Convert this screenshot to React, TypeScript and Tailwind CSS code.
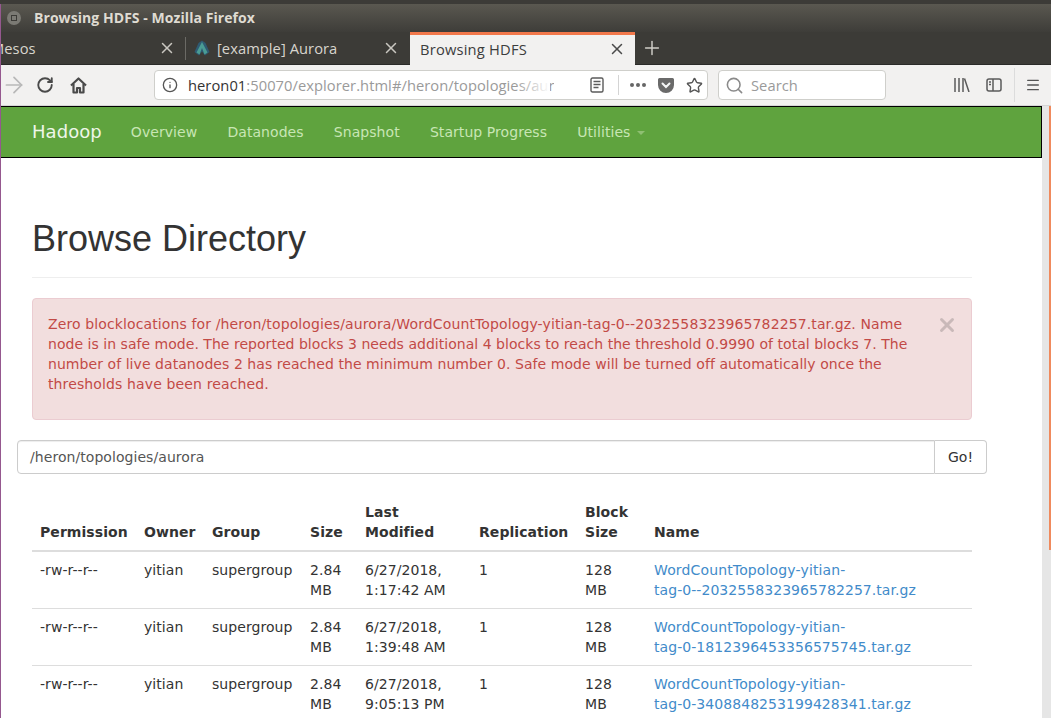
import { X, Plus, Info, Search, ArrowRight, RotateCw, Star, Menu } from "lucide-react";

const rows = [
  { time: "1:17:42 AM", file: "tag-0--2032558323965782257.tar.gz" },
  { time: "1:39:48 AM", file: "tag-0-1812396453356575745.tar.gz" },
  { time: "9:05:13 PM", file: "tag-0-3408848253199428341.tar.gz" },
];

function BrowserChrome() {
  return (
    <div className="font-['Open_Sans',sans-serif]">
      {/* Title bar */}
      <div className="h-[32px] border-t-[4px] border-[#3c3b37] bg-gradient-to-b from-[#5a5850] to-[#3e3d39] flex items-center pl-[7px]">
        <div className="w-[14px] h-[14px] rounded-full bg-[#7b7a74] flex items-center justify-center">
          <div className="w-[6px] h-[6px] border border-[#3c3b37]" />
        </div>
        <span className="ml-[13px] text-[14px] font-bold text-[#dfdbd2]">Browsing HDFS - Mozilla Firefox</span>
      </div>

      {/* Tabs */}
      <div className="h-[33px] bg-[#3c3b37] flex items-stretch text-[14.7px] border-b border-[#2a2a28]">
        <div className="w-[186px] relative overflow-hidden flex items-center">
          <span className="absolute left-[-9px] text-[#d8d5ce]">Mesos</span>
          <X size={18} strokeWidth={2} className="absolute left-[158px] text-[#c9c7c0]" />
          <div className="absolute right-0 top-[5px] bottom-[4px] w-px bg-[#6b6a65]" />
        </div>
        <div className="w-[224px] relative flex items-center">
          <svg width="16" height="16" viewBox="0 0 16 16" className="absolute left-[8px]">
            <path d="M8 0.5 L11.5 3 L15.5 12 L11 15.5 L8 11.5 L5 15.5 L0.5 12 L4.5 3 Z" fill="#2f5a72" />
            <path d="M8 2 L13.5 12.5 L10.5 14.5 L8 8 L5.5 14.5 L2.5 12.5 Z" fill="#4a9c94" />
          </svg>
          <span className="absolute left-[31px] text-[#d8d5ce]">[example] Aurora</span>
          <X size={18} strokeWidth={2} className="absolute left-[196px] text-[#c9c7c0]" />
        </div>
        <div className="w-[225px] -mb-px pb-[3px] bg-[#f2f1f0] border-t-[3px] border-[#f2784b] relative flex items-center">
          <span className="ml-[10px] text-[#3d3d3d] tracking-[0.2px]">Browsing HDFS</span>
          <X size={18} strokeWidth={2} className="absolute left-[198px] text-[#4a4a4a]" />
        </div>
        <div className="flex items-center ml-[6px]">
          <Plus size={22} strokeWidth={1.6} className="text-[#d0cec8]" />
        </div>
      </div>

      {/* Toolbar */}
      <div className="h-[41px] bg-[#f2f1f0] border-b border-[#d6d6d6] flex items-center relative">
        <ArrowRight size={26} strokeWidth={1.6} className="ml-[1px] text-[#b8b8b8]" />
        <RotateCw size={18} className="ml-[9px] text-[#4a4a4a]" strokeWidth={2.5} />
        <svg width="17" height="17" viewBox="0 0 17 17" className="ml-[16px]" fill="none" stroke="#4a4a4a" strokeWidth="2.2" strokeLinejoin="round">
          <path d="M1 8.5L8.5 1.5L16 8.5" />
          <path d="M3.5 7v8.5h3.5v-4.5h3v4.5h3.5V7" />
        </svg>
        <div className="ml-[67px] w-[554px] h-[30px] bg-white border border-[#cfcfcb] rounded-[4px] flex items-center text-[14.7px] relative">
          <Info size={16} className="ml-[7px] text-[#555]" />
          <span className="ml-[10px] w-[366px] overflow-hidden whitespace-nowrap text-[#9a9a9a]">
            <span className="text-[#333]">heron01</span>:50070/explorer.html#/heron/topologies/aurora
          </span>
          <div className="absolute left-[360px] w-[35px] top-0 bottom-0 bg-gradient-to-r from-transparent to-white" />
          <svg width="14" height="16" viewBox="0 0 14 16" className="absolute left-[435px]" fill="none" stroke="#5b5b5b" strokeWidth="1.4">
            <rect x="1" y="1" width="12" height="14" rx="1.5" />
            <path d="M3.5 4.5h7M3.5 7.5h7M3.5 10.5h5" />
          </svg>
          <div className="absolute left-[463px] top-[4px] bottom-[4px] w-px bg-[#d4d4d4]" />
          <div className="absolute left-[475px] flex gap-[2px]">
            <span className="w-[4px] h-[4px] rounded-full bg-[#666]" />
            <span className="w-[4px] h-[4px] rounded-full bg-[#666]" />
            <span className="w-[4px] h-[4px] rounded-full bg-[#666]" />
          </div>
          <svg width="16" height="15" viewBox="0 0 16 15" className="absolute left-[503px]">
            <path d="M1.5 0h13A1.5 1.5 0 0 1 16 1.5V7a8 8 0 0 1-16 0V1.5A1.5 1.5 0 0 1 1.5 0z" fill="#6a6a6a" />
            <path d="M4.5 5.5L8 9l3.5-3.5" fill="none" stroke="#f5f6f7" strokeWidth="2" strokeLinecap="round" />
          </svg>
          <Star size={17} className="absolute left-[531px] text-[#555]" strokeWidth={2} />
        </div>
        <div className="ml-[10px] w-[168px] h-[30px] bg-white border border-[#cfcfcb] rounded-[4px] flex items-center text-[14.7px]">
          <Search size={19} className="ml-[6px] text-[#8a8a8a]" />
          <span className="ml-[7px] text-[#9a9a9a]">Search</span>
        </div>
        <svg width="16" height="14" viewBox="0 0 16 14" className="absolute left-[954px]" fill="none" stroke="#5b5b5b" strokeWidth="1.5">
          <path d="M1 0v14M5 0v14M9 0v14M10.5 0.5L15 14" />
        </svg>
        <svg width="16" height="14" viewBox="0 0 16 14" className="absolute left-[986px]" fill="none" stroke="#5b5b5b" strokeWidth="1.5">
          <rect x="1" y="1" width="14" height="12" rx="2" />
          <path d="M7 1v12" />
          <path d="M3 4h2M3 6.5h2" />
        </svg>
        <div className="absolute left-[1014px] top-[3px] bottom-[3px] w-px bg-[#dcdcdc]" />
        <Menu size={16} className="absolute left-[1025px] text-[#555]" />
      </div>
    </div>
  );
}

export default function App() {
  return (
    <div className="relative w-[1051px] h-[718px] overflow-hidden bg-white flex flex-col font-['DejaVu_Sans',sans-serif] text-[14px] leading-[20px] tracking-[0.06px] text-[#333]">
      <BrowserChrome />
      {/* Purple sliver of the window behind */}
      <div className="absolute left-0 top-[4px] bottom-0 w-px bg-[#95588f]" />
      <div className="flex-1 flex min-h-0">
        <div className="flex-1 min-w-0 pl-px">
          {/* Navbar */}
          <nav className="h-[52px] bg-[#5fa33e] border border-black border-l-0 flex items-center pl-[31px]">
            <a className="text-[18px] text-[#eef6e9]">Hadoop</a>
            <ul className="flex ml-[29px] gap-[30.2px] text-[#c8e6b5]">
              <li>Overview</li>
              <li>Datanodes</li>
              <li>Snapshot</li>
              <li>Startup Progress</li>
              <li className="flex items-center">
                Utilities
                <span className="ml-[7px] mt-[2px] w-0 h-0 border-x-[4px] border-x-transparent border-t-[4px] border-t-[#8fbf73]" />
              </li>
            </ul>
          </nav>

          <main className="pl-[31px] w-[971px]">
            <div className="mt-[61px] pb-[18px] border-b border-[#eeeeee]">
              <h1 className="font-['Liberation_Sans',sans-serif] text-[36px] leading-[40px] tracking-normal text-[#333]">Browse Directory</h1>
            </div>

            <div className="mt-[20px] h-[122px] bg-[#f2dede] border border-[#ebccd1] rounded-[4px] pl-[15px] pt-[15px] text-[#c24a46] relative whitespace-nowrap">
              <X size={22} strokeWidth={3.2} className="absolute right-[13px] top-[15px] text-[#c9b9b9]" />
              <span className="tracking-[0.12px]">Zero blocklocations for /heron/topologies/aurora/WordCountTopology-yitian-tag-0--2032558323965782257.tar.gz. Name</span>
              <br />
              <span className="tracking-[0.03px]">node is in safe mode. The reported blocks 3 needs additional 4 blocks to reach the threshold 0.9990 of total blocks 7. The</span>
              <br />
              number of live datanodes 2 has reached the minimum number 0. Safe mode will be turned off automatically once the
              <br />
              <span className="tracking-[0.13px]">thresholds have been reached.</span>
            </div>

            <div className="mt-[20px] -ml-[15px] w-[970px] h-[34px] flex">
              <div className="flex-1 border border-[#cccccc] rounded-l-[4px] flex items-center pl-[12px] text-[#555] shadow-[inset_0_1px_1px_rgba(0,0,0,0.075)]">
                /heron/topologies/aurora
              </div>
              <div className="w-[52px] border border-l-0 border-[#cccccc] rounded-r-[4px] flex items-center justify-center">Go!</div>
            </div>

            <table className="mt-[20px] w-[940px] table-fixed border-collapse">
              <thead>
                <tr className="border-b-2 border-[#dddddd] text-left align-bottom">
                  <th className="w-[104px] p-[8px]">Permission</th>
                  <th className="w-[68px] p-[8px]">Owner</th>
                  <th className="w-[98px] p-[8px]">Group</th>
                  <th className="w-[55px] p-[8px]">Size</th>
                  <th className="w-[114px] p-[8px]">Last Modified</th>
                  <th className="w-[106px] p-[8px]">Replication</th>
                  <th className="w-[69px] p-[8px]">Block Size</th>
                  <th className="p-[8px]">Name</th>
                </tr>
              </thead>
              <tbody>
                {rows.map((r) => (
                  <tr key={r.file} className="border-b border-[#dddddd] align-top">
                    <td className="p-[8px]">-rw-r--r--</td>
                    <td className="p-[8px]">yitian</td>
                    <td className="p-[8px]">supergroup</td>
                    <td className="p-[8px]">2.84 MB</td>
                    <td className="p-[8px]">6/27/2018, {r.time}</td>
                    <td className="p-[8px]">1</td>
                    <td className="p-[8px]">
                      128
                      <br />
                      MB
                    </td>
                    <td className="p-[8px] text-[#428bca]">
                      <span className="tracking-[0.14px]">WordCountTopology-yitian-</span>
                      <br />
                      {r.file}
                    </td>
                  </tr>
                ))}
              </tbody>
            </table>
          </main>
        </div>
        {/* Scrollbar */}
        <div className="w-[9px] bg-[#e6e6e6]">
          <div className="ml-auto w-[2px] h-[444px] bg-[#f08a5d]" />
        </div>
      </div>
    </div>
  );
}
